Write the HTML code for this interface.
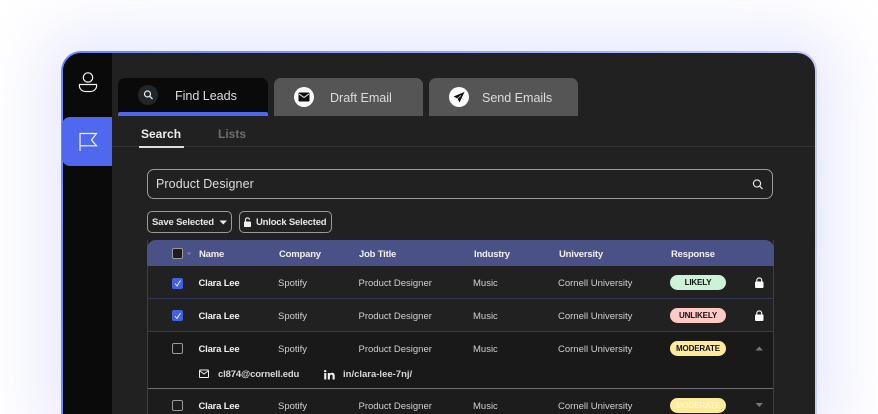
<!DOCTYPE html>
<html><head><meta charset="utf-8"><style>
*{box-sizing:border-box;margin:0;padding:0}
html,body{width:878px;height:414px;overflow:hidden;background:#fff;font-family:"Liberation Sans",sans-serif}
#root{position:absolute;left:0;top:0;width:878px;height:414px;overflow:hidden;background:#fff}
.a{position:absolute;white-space:nowrap}
#frame{left:61px;top:51px;width:756px;height:363px;border-radius:20px 20px 0 0;background:linear-gradient(100deg,#6f83f5,#8b9bfa 40%,#c9d0fc);box-shadow:0 0 60px 22px rgba(190,198,250,.36)}
#inner{left:63px;top:53px;width:752px;height:361px;border-radius:18px 18px 0 0;background:#212121;overflow:hidden}
.t{font-size:9.5px;color:#d0d0d0;line-height:12px}
.n{font-size:9.5px;color:#f2f2f2;font-weight:bold;line-height:12px;letter-spacing:-.2px}
.h{font-size:9.5px;color:#f0f0f0;font-weight:bold;line-height:12px;letter-spacing:-.2px}
.tab{top:78px;height:38px;border-radius:7px 7px 0 0;background:#555;width:150px}
.tl{font-size:12.6px;color:#dcdcdc;line-height:16px;letter-spacing:-.05px}
.ck{left:172px;width:11px;height:11px;border:1px solid #9a9a9a;border-radius:2px}
.ckd{background:#4460e6;border-color:#4460e6}
.pill{left:670px;width:56px;height:15px;border-radius:8px;text-align:center;font-size:8px;font-weight:bold;line-height:15px;color:#111;letter-spacing:-.15px}
svg{position:absolute;overflow:hidden}
</style></head><body><div id="root">
<div class="a" id="frame"></div>
<div class="a" id="inner"></div>
<div class="a" style="left:63px;top:53px;width:49px;height:361px;background:#0a0a0a;border-radius:18px 0 0 0"></div>

<svg style="left:0;top:0" width="878" height="414" fill="none">
<circle cx="88" cy="77.500" r="4.700" stroke="#f2f2f2" stroke-width="1.200"/>
<path d="M79.500 84.500h17c.8 4-2.500 7-6 7h-5c-3.500 0-6.800-3-6-7z" stroke="#f2f2f2" stroke-width="1.200"/>
</svg>
<div class="a" style="left:62px;top:117px;width:50px;height:49px;background:#5068f0;border-radius:8px 0 0 8px"></div>
<svg style="left:0;top:0" width="878" height="414" fill="none">
<path d="M80 151V133.500H96.500L91.500 140L96.500 145.800H80" stroke="#f4f4fb" stroke-width="1.200"/>
</svg>

<div class="a tab" style="left:118px;background:#0a0a0a"></div>
<div class="a" style="left:118px;top:112px;width:150px;height:4px;background:#4f67e8;border-radius:2px 2px 0 0"></div>
<div class="a" style="left:138px;top:85px;width:20px;height:20px;border-radius:50%;background:#22252a"></div>
<svg style="left:0;top:0" width="878" height="414" fill="none">
<circle cx="147.500" cy="94" r="3" stroke="#eee" stroke-width="1.200"/><path d="M149.800 96.300L152.500 99" stroke="#eee" stroke-width="1.300"/>
</svg>
<div class="a tl" style="left:175px;top:88px">Find Leads</div>
<div class="a tab" style="left:274px;width:149px"></div>
<div class="a" style="left:294px;top:87px;width:20px;height:20px;border-radius:50%;background:#fff"></div>
<svg style="left:0;top:0" width="878" height="414" fill="none">
<rect x="298.500" y="92.500" width="11" height="9" rx="1" fill="#0c0c0c"/><path d="M299 94l5 3.500l5-3.500" stroke="#fff" stroke-width=".9"/>
</svg>
<div class="a tl" style="left:330px;top:90px">Draft Email</div>
<div class="a tab" style="left:429px;width:149px"></div>
<div class="a" style="left:449px;top:87px;width:20px;height:20px;border-radius:50%;background:#fff"></div>
<svg style="left:0;top:0" width="878" height="414" fill="none">
<path d="M464.500 92L453.500 96.500L457.500 98.500L459.500 102.500Z" fill="#0c0c0c"/><path d="M457.500 98.500L461 95.500" stroke="#fff" stroke-width=".6"/>
</svg>
<div class="a tl" style="left:482px;top:90px">Send Emails</div>

<div class="a" style="left:141px;top:127px;font-size:12px;font-weight:bold;color:#eee;line-height:14px">Search</div>
<div class="a" style="left:218px;top:127px;font-size:12px;font-weight:bold;color:#6e6e6e;line-height:14px">Lists</div>
<div class="a" style="left:112px;top:146px;width:703px;height:1px;background:#333"></div>
<div class="a" style="left:139px;top:146px;width:45px;height:2px;background:#ddd"></div>

<div class="a" style="left:147px;top:169px;width:626px;height:30px;border:1px solid #9a9a9a;border-radius:7px"></div>
<div class="a" style="left:156px;top:176px;font-size:12.500px;line-height:16px;color:#dedede;letter-spacing:.08px">Product Designer</div>
<svg style="left:0;top:0" width="878" height="414" fill="none">
<circle cx="757" cy="183.500" r="3.600" stroke="#eee" stroke-width="1.100"/><path d="M759.700 186.200L762.500 189" stroke="#eee" stroke-width="1.200"/>
</svg>

<div class="a" style="left:147px;top:211px;width:85px;height:22px;border:1px solid #9a9a9a;border-radius:5px"></div>
<div class="a" style="left:152px;top:217px;font-size:9.500px;font-weight:bold;color:#e6e6e6;line-height:12px;letter-spacing:-.15px">Save Selected</div>
<svg style="left:0;top:0" width="878" height="414" fill="none"><path d="M219.500 220.500h7.500l-3.750 4z" fill="#eee"/></svg>
<div class="a" style="left:239px;top:211px;width:93px;height:22px;border:1px solid #9a9a9a;border-radius:5px"></div>
<svg style="left:0;top:0" width="878" height="414" fill="none">
<rect x="244" y="221.500" width="7" height="5.500" rx=".8" fill="#eee"/><path d="M245.500 222v-2.300c0-2.400 3.800-2.400 4 0" stroke="#eee" stroke-width="1.100"/>
</svg>
<div class="a" style="left:256px;top:217px;font-size:9.500px;font-weight:bold;color:#e6e6e6;line-height:12px;letter-spacing:-.2px">Unlock Selected</div>

<div class="a" style="left:147px;top:240px;width:627px;height:174px;border:1px solid #383c5c;border-top:0;border-bottom:0"></div>
<div class="a" style="left:147px;top:240px;width:627px;height:26px;background:#4a5186;border-radius:9px 9px 0 0"></div>
<div class="a ck" style="top:247.500px;background:#1c1c1c;border-color:#999"></div>
<svg style="left:0;top:0" width="878" height="414" fill="none"><path d="M186.500 252.500h5l-2.500 2.500z" fill="#7d82a8"/></svg>
<div class="a h" style="left:199px;top:249px">Name</div>
<div class="a h" style="left:279px;top:249px">Company</div>
<div class="a h" style="left:359px;top:249px">Job Title</div>
<div class="a h" style="left:474px;top:249px">Industry</div>
<div class="a h" style="left:559px;top:249px">University</div>
<div class="a h" style="left:671px;top:249px">Response</div>

<div class="a ck ckd" style="top:277.500px"></div>
<svg style="left:0;top:0" width="878" height="414" fill="none"><path d="M175 283.500l2 2.500l3.500-5.500" stroke="#fff" stroke-width=".9"/></svg>
<div class="a n" style="left:198.500px;top:278px">Clara Lee</div>
<div class="a t" style="left:278px;top:278px">Spotify</div>
<div class="a t" style="left:358.500px;top:278px">Product Designer</div>
<div class="a t" style="left:473px;top:278px">Music</div>
<div class="a t" style="left:558px;top:278px">Cornell University</div>
<div class="a pill" style="top:275px;background:#ccf3d8">LIKELY</div>
<svg style="left:0;top:0" width="878" height="414" fill="none">
<rect x="755" y="281.500" width="8.500" height="6.500" rx="1" fill="#fff"/><path d="M756.800 282v-1.800c0-3 4.900-3 4.900 0v1.800" stroke="#fff" stroke-width="1.100"/>
</svg>
<div class="a" style="left:148px;top:298px;width:625px;height:1px;background:#343756"></div>

<div class="a ck ckd" style="top:310px"></div>
<svg style="left:0;top:0" width="878" height="414" fill="none"><path d="M175 316l2 2.500l3.500-5.500" stroke="#fff" stroke-width=".9"/></svg>
<div class="a n" style="left:198.500px;top:311px">Clara Lee</div>
<div class="a t" style="left:278px;top:311px">Spotify</div>
<div class="a t" style="left:358.500px;top:311px">Product Designer</div>
<div class="a t" style="left:473px;top:311px">Music</div>
<div class="a t" style="left:558px;top:311px">Cornell University</div>
<div class="a pill" style="top:308px;background:#ffc9c6">UNLIKELY</div>
<svg style="left:0;top:0" width="878" height="414" fill="none">
<rect x="755" y="314.500" width="8.500" height="6.500" rx="1" fill="#fff"/><path d="M756.800 315v-1.800c0-3 4.900-3 4.900 0v1.800" stroke="#fff" stroke-width="1.100"/>
</svg>

<div class="a" style="left:148px;top:331px;width:625px;height:57px;background:#191919"></div>
<div class="a" style="left:148px;top:331px;width:625px;height:1px;background:#343756"></div>
<div class="a ck" style="top:343px"></div>
<div class="a n" style="left:198.500px;top:344px">Clara Lee</div>
<div class="a t" style="left:278px;top:344px">Spotify</div>
<div class="a t" style="left:358.500px;top:344px">Product Designer</div>
<div class="a t" style="left:473px;top:344px">Music</div>
<div class="a t" style="left:558px;top:344px">Cornell University</div>
<div class="a pill" style="top:341px;background:#fdeb9b">MODERATE</div>
<svg style="left:0;top:0" width="878" height="414" fill="none">
<path d="M755.500 350.500h7.500l-3.750-4z" fill="#777"/>
<rect x="199.500" y="370" width="9" height="7.500" rx=".8" stroke="#eee" stroke-width="1"/><path d="M200 371l4 3l4-3" stroke="#eee" stroke-width="1"/>
<path d="M324.200 373h2.100v6.500h-2.100zM327.800 373h2v.9c.5-.7 1.300-1.100 2.200-1.100 1.900 0 2.700 1.200 2.700 3.100v3.600h-2.100v-3.200c0-1-.3-1.700-1.200-1.700s-1.500.7-1.500 1.700v3.200h-2.100z" fill="#f2f2f2"/><circle cx="325.200" cy="371.100" r="1.200" fill="#f2f2f2"/>
</svg>
<div class="a" style="left:218px;top:369px;font-size:9.500px;font-weight:bold;color:#d8d8d8;line-height:12px;letter-spacing:-.15px">cl874@cornell.edu</div>
<div class="a" style="left:343px;top:369px;font-size:9.500px;font-weight:bold;color:#d8d8d8;line-height:12px">in/clara-lee-7nj/</div>
<div class="a" style="left:148px;top:388px;width:625px;height:1px;background:#707070"></div>
<div class="a" style="left:148px;top:389px;width:625px;height:25px;background:#1c1c1c"></div>
<div class="a ck" style="top:400px"></div>
<div class="a n" style="left:198.500px;top:401px">Clara Lee</div>
<div class="a t" style="left:278px;top:401px">Spotify</div>
<div class="a t" style="left:358.500px;top:401px">Product Designer</div>
<div class="a t" style="left:473px;top:401px">Music</div>
<div class="a t" style="left:558px;top:401px">Cornell University</div>
<div class="a pill" style="top:398px;background:#fdeb9b;color:#fff6c9">MODERATE</div>
<svg style="left:0;top:0" width="878" height="414" fill="none"><path d="M755.500 403h7.500l-3.750 4z" fill="#777"/></svg>
</div></body></html>
